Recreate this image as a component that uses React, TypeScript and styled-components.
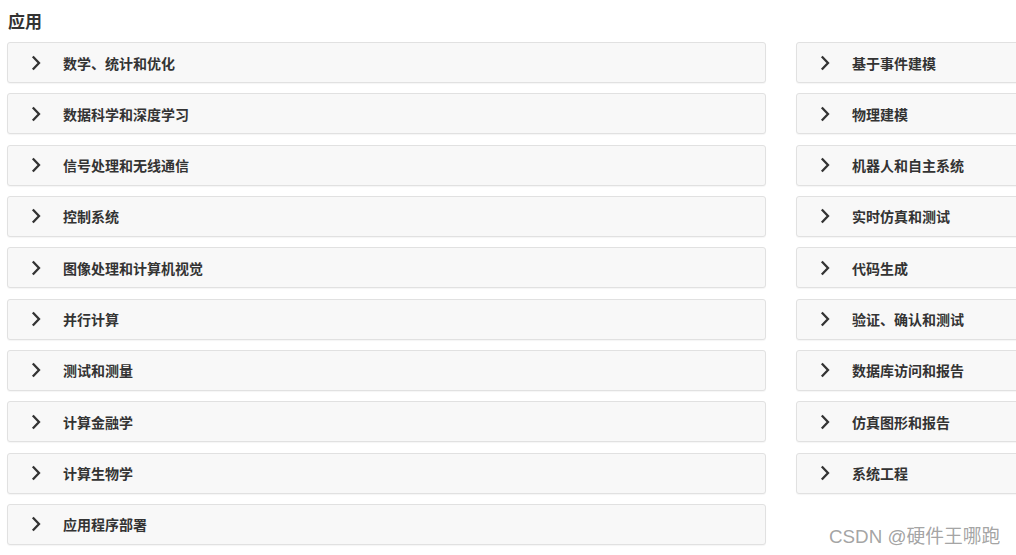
import { Fragment } from "react"
import styled, { createGlobalStyle } from "styled-components"

const Global = createGlobalStyle`
    html, body {
        margin: 0;
        padding: 0;
        background: #ffffff;
        overflow: hidden;
    }
    body {
        font-family: "Noto Sans CJK SC", "Liberation Sans", sans-serif;
        color: #333333;
    }
`

const Page = styled('div')`
    position: relative;
    width: 1016px;
    height: 555px;
    overflow: hidden;
    padding: 9px 0 0 7px;
    box-sizing: border-box;
`

const Title = styled('h2')`
    margin: 0 0 9px 1px;
    font-size: 17px;
    line-height: 24px;
    font-weight: 700;
    color: #333333;
`

const Columns = styled('div')`
    display: flex;
    gap: 30px;
    width: 1548px;
`

const Column = styled('div')`
    display: flex;
    flex-direction: column;
    gap: 10.33px;
    width: 759px;
    flex-shrink: 0;
`

const Card = styled('div')`
    display: flex;
    align-items: center;
    height: 41px;
    box-sizing: border-box;
    background: #f8f8f8;
    border: 1px solid #e1e1e1;
    border-radius: 3px;
    box-shadow: 0 1px 1px rgba(0, 0, 0, 0.04);
    padding-left: 23px;

    .label {
        margin-left: 22px;
        font-size: 14px;
        font-weight: 700;
        color: #333333;
    }
`

const Watermark = styled('div')`
    position: absolute;
    left: 829px;
    top: 521px;
    font-family: "Liberation Sans", "Noto Sans CJK SC", sans-serif;
    font-size: 18.8px;
    color: rgba(140, 140, 140, 0.8);
    white-space: nowrap;
`

const Chevron = () => (
    <svg width="10" height="16" viewBox="0 0 10 16">
        <polyline points="1.8,1.5 8,8 1.8,14.5" fill="none" stroke="#333333" strokeWidth="2.3" />
    </svg>
)

const App = (): JSX.Element => {

    const left: string[] = [
        "数学、统计和优化",
        "数据科学和深度学习",
        "信号处理和无线通信",
        "控制系统",
        "图像处理和计算机视觉",
        "并行计算",
        "测试和测量",
        "计算金融学",
        "计算生物学",
        "应用程序部署",
    ]

    const right: string[] = [
        "基于事件建模",
        "物理建模",
        "机器人和自主系统",
        "实时仿真和测试",
        "代码生成",
        "验证、确认和测试",
        "数据库访问和报告",
        "仿真图形和报告",
        "系统工程",
    ]

    return (
        <Fragment>
            <Global />
            <Page>
                <Title>应用</Title>
                <Columns>
                    <Column>
                        {left.map((v, i) => (
                            <Card key={i}>
                                <Chevron />
                                <span className="label">{v}</span>
                            </Card>
                        ))}
                    </Column>
                    <Column>
                        {right.map((v, i) => (
                            <Card key={i}>
                                <Chevron />
                                <span className="label">{v}</span>
                            </Card>
                        ))}
                    </Column>
                </Columns>
                <Watermark>CSDN @硬件王哪跑</Watermark>
            </Page>
        </Fragment>
    )
}

export default App
